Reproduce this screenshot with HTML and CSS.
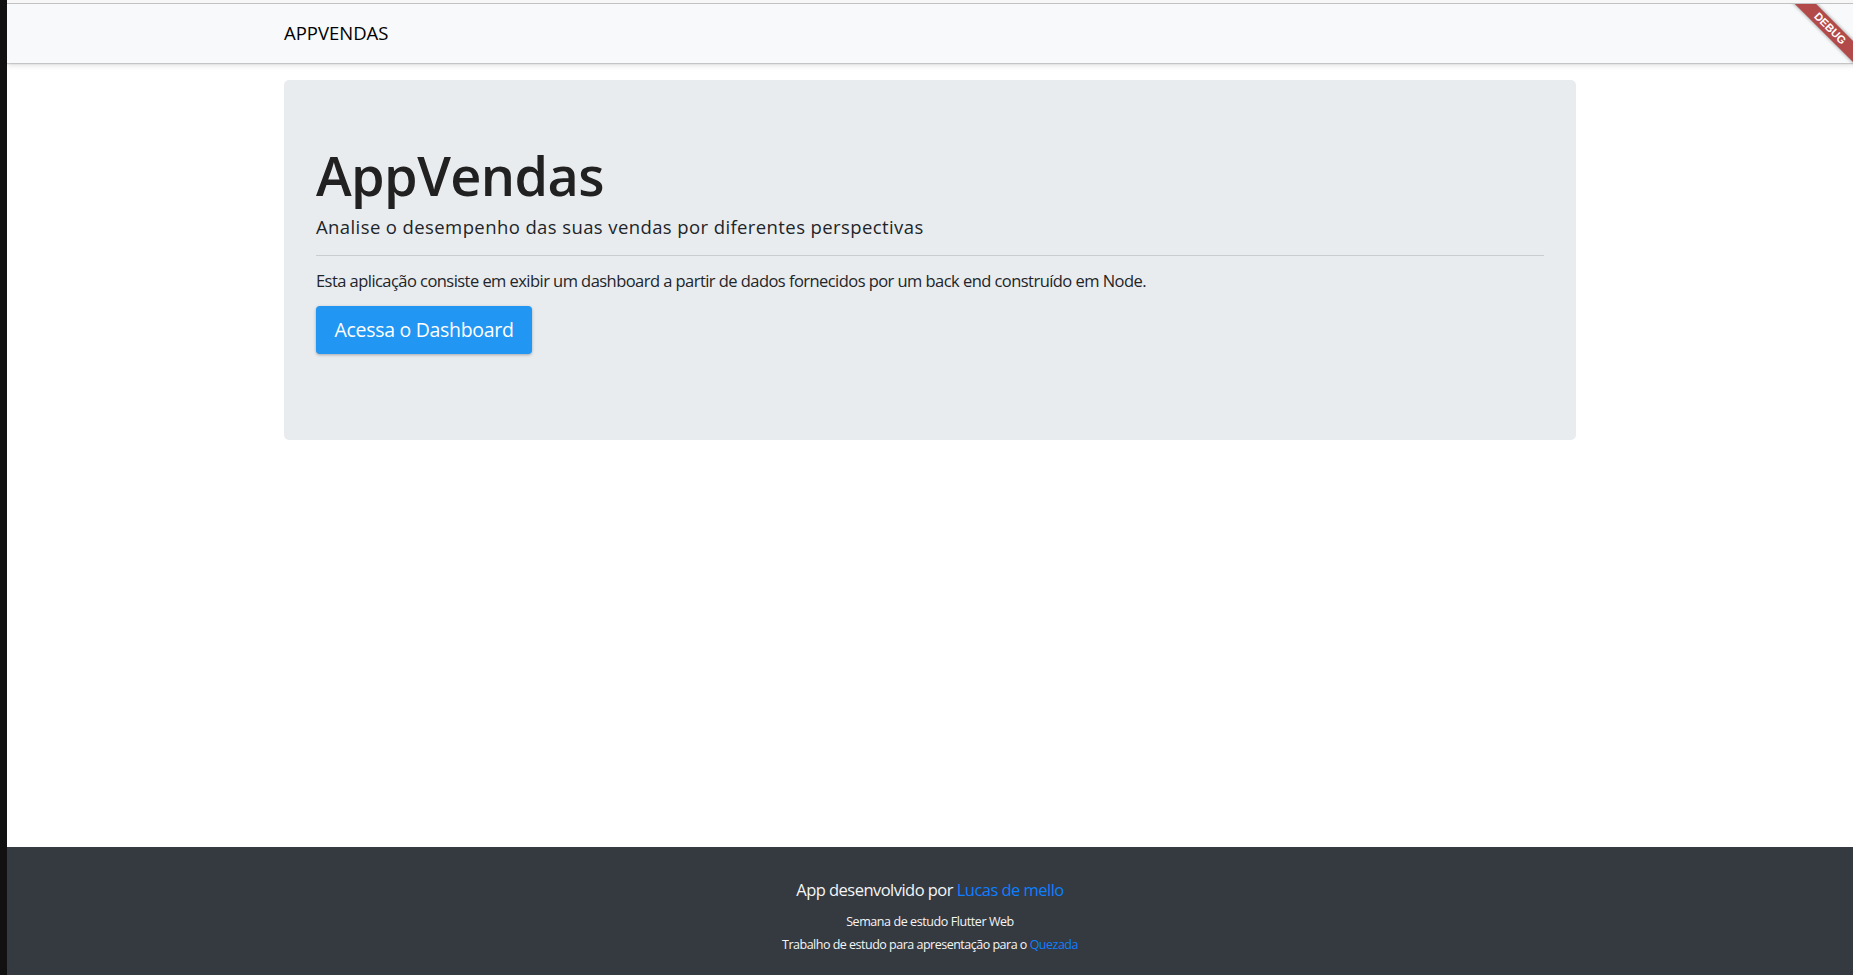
FILE: index.html
```html
<!DOCTYPE html>
<html lang="pt-BR">
<head>
<meta charset="utf-8">
<title>AppVendas</title>
<link rel="stylesheet" href="styles.css">
</head>
<body>
  <div class="side"></div>
  <div class="window">
    <div class="topstrip"></div>
    <div class="app">
      <header class="navbar">
        <div class="container">
          <span class="brand">APPVENDAS</span>
        </div>
      </header>
      <main class="main">
        <section class="jumbotron">
          <h1 class="title">AppVendas</h1>
          <p class="lead">Analise o desempenho das suas vendas por diferentes perspectivas</p>
          <hr class="divider">
          <p class="desc">Esta aplicação consiste em exibir um dashboard a partir de dados fornecidos por um back end construído em Node.</p>
          <a class="btn" href="#">Acessa o Dashboard</a>
        </section>
      </main>
      <footer class="footer">
        <p class="f1">App desenvolvido por <a class="link" href="#">Lucas de mello</a></p>
        <p class="f2">Semana de estudo Flutter Web</p>
        <p class="f3">Trabalho de estudo para apresentação para o <a class="link" href="#">Quezada</a></p>
      </footer>
      <div class="banner">DEBUG</div>
    </div>
  </div>
</body>
</html>
```
FILE: styles.css
```css
* { box-sizing: border-box; }
html, body { height: 100%; }
body {
  margin: 0;
  display: flex;
  height: 975px;
  overflow: hidden;
  font-family: "Open Sans", "Noto Sans", "Liberation Sans", sans-serif;
  color: #212529;
  background: #fff;
}
.side {
  width: 7px;
  flex: none;
  background: #111;
}
.window {
  flex: 1;
  display: flex;
  flex-direction: column;
  min-width: 0;
}
.topstrip {
  height: 4px;
  flex: none;
  background: #f7f7f7;
  border-bottom: 1px solid #c2c2c2;
}
.app {
  flex: 1;
  display: flex;
  flex-direction: column;
  position: relative;
  overflow: hidden;
  background: #fff;
}
.container {
  width: 1292px;
  margin: 0 auto;
}
.navbar {
  height: 59px;
  flex: none;
  background: #f8f9fa;
  box-shadow: 0 1px 1px rgba(0,0,0,0.15), 0 2px 6px rgba(0,0,0,0.14);
  position: relative;
  z-index: 1;
}
.brand {
  display: block;
  font-size: 18.5px;
  line-height: 58px;
  color: #000;
}
.main {
  flex: 1;
  padding-top: 17px;
}
.jumbotron {
  width: 1292px;
  height: 360px;
  margin: 0 auto;
  background: #e9ecef;
  border-radius: 5px;
  padding: 65px 32px 0;
}
.title {
  margin: 0;
  font-size: 54px;
  line-height: 60px;
  font-weight: 600;
  letter-spacing: -0.6px;
  color: #212121;
}
.lead {
  margin: 9.5px 0 0;
  font-size: 18.5px;
  line-height: 24px;
  letter-spacing: 0.4px;
  color: #212529;
}
.divider {
  margin: 16.5px 0 0;
  border: 0;
  height: 1px;
  background: #c9ccd0;
}
.desc {
  margin: 13px 0 0;
  font-size: 16.5px;
  line-height: 24px;
  letter-spacing: -0.55px;
  color: #212529;
}
.btn {
  display: block;
  margin-top: 13px;
  width: 216px;
  height: 48px;
  line-height: 48px;
  text-align: center;
  background: #2196f3;
  color: #fff;
  font-size: 19.5px;
  letter-spacing: -0.3px;
  text-decoration: none;
  border-radius: 4px;
  box-shadow: 0 1px 3px rgba(0,0,0,0.3);
}
.footer {
  height: 128px;
  flex: none;
  background: #343a40;
  color: #f4f5f6;
  text-align: center;
  padding-top: 31px;
}
.footer p { margin: 0; }
.f1 { font-size: 16.5px; line-height: 24px; letter-spacing: -0.53px; }
.f2 { font-size: 12.5px; line-height: 18px; letter-spacing: -0.42px; margin-top: 11px !important; }
.f3 { font-size: 12.5px; line-height: 18px; letter-spacing: -0.5px; margin-top: 4.5px !important; }
.link { color: #0d7fff; text-decoration: none; }
.banner {
  position: absolute;
  z-index: 10;
  top: 16.5px;
  right: -26.5px;
  width: 100px;
  height: 15px;
  line-height: 15px;
  transform: rotate(45deg);
  background: #b34a4a;
  color: #fff;
  font-family: "Liberation Sans", sans-serif;
  font-weight: 700;
  font-size: 11px;
  text-align: center;
  box-shadow: 0 0 4px rgba(0,0,0,0.45);
}
```
